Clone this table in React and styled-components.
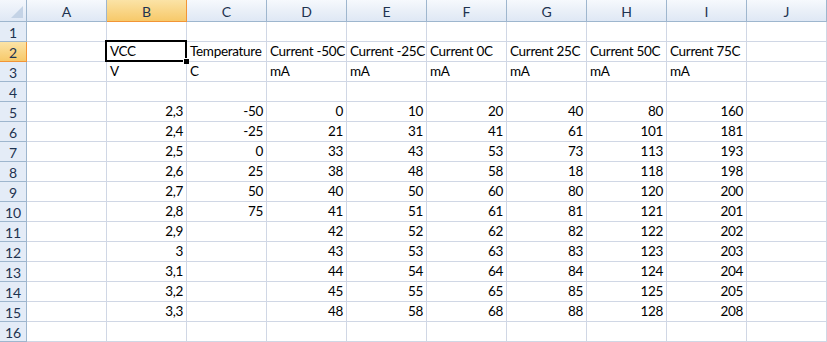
import React from 'react';
import styled, { createGlobalStyle, css } from 'styled-components';

const GlobalStyle = createGlobalStyle`
  html, body {
    margin: 0;
    padding: 0;
    background: #ffffff;
  }
  body {
    font-family: Lato, "Open Sans", sans-serif;
  }
`;

const Sheet = styled.div`
  display: grid;
  grid-template-columns: 27px repeat(10, 80px);
  grid-template-rows: 22px repeat(16, 20px);
  width: 827px;
  height: 342px;
  overflow: hidden;
  background: #ffffff;
`;

const Corner = styled.div`
  position: relative;
  box-sizing: border-box;
  background: linear-gradient(#f4f7fc, #dfe8f5);
  border-right: 1px solid #9eb6ce;
  border-bottom: 1px solid #9eb6ce;

  &::after {
    content: '';
    position: absolute;
    right: 3px;
    bottom: 3px;
    width: 0;
    height: 0;
    border-left: 12px solid transparent;
    border-bottom: 12px solid #c4d3e6;
  }
`;

const headActive = css`
  background: linear-gradient(#fbe3a6, #f7c96a);
  border-color: #f29536;
`;

const ColHead = styled.div`
  box-sizing: border-box;
  display: flex;
  align-items: center;
  justify-content: center;
  padding-top: 1px;
  background: linear-gradient(#f6f9fd 0%, #eaf0f8 50%, #dfe8f5 100%);
  border-right: 1px solid #9eb6ce;
  border-bottom: 1px solid #9eb6ce;
  color: #1e3350;
  font-size: 14px;
  ${(p) => p.$active && headActive}
`;

const RowHead = styled.div`
  box-sizing: border-box;
  display: flex;
  align-items: center;
  justify-content: center;
  padding-top: 1px;
  background: #e4ecf7;
  border-right: 1px solid #9eb6ce;
  border-bottom: 1px solid #9eb6ce;
  color: #1e3350;
  font-size: 14px;
  ${(p) => p.$active && headActive}
`;

const Cell = styled.div`
  position: relative;
  box-sizing: border-box;
  display: flex;
  align-items: flex-end;
  justify-content: ${(p) => (p.$num ? 'flex-end' : 'flex-start')};
  padding: 0 3px 1px 3px;
  border-right: 1px solid #d0d7e5;
  border-bottom: 1px solid #d0d7e5;
  font-size: 13.5px;
  letter-spacing: -0.3px;
  line-height: 18px;
  color: #000000;
  white-space: nowrap;
  overflow: ${(p) => (p.$selected ? 'visible' : 'hidden')};
`;

const Selection = styled.div`
  position: absolute;
  left: -2px;
  top: -2px;
  right: -1px;
  bottom: -1px;
  border: 2px solid #000000;
  pointer-events: none;
  z-index: 2;

  &::after {
    content: '';
    position: absolute;
    right: -4px;
    bottom: -4px;
    width: 5px;
    height: 5px;
    background: #000000;
    border: 1px solid #ffffff;
    border-right: none;
    border-bottom: none;
  }
`;

const COLS = ['A', 'B', 'C', 'D', 'E', 'F', 'G', 'H', 'I', 'J'];

const data = {
  2: { B: 'VCC', C: 'Temperature', D: 'Current -50C', E: 'Current -25C', F: 'Current 0C', G: 'Current 25C', H: 'Current 50C', I: 'Current 75C' },
  3: { B: 'V', C: 'C', D: 'mA', E: 'mA', F: 'mA', G: 'mA', H: 'mA', I: 'mA' },
};

const numbers = [
  ['2,3', -50, 0, 10, 20, 40, 80, 160],
  ['2,4', -25, 21, 31, 41, 61, 101, 181],
  ['2,5', 0, 33, 43, 53, 73, 113, 193],
  ['2,6', 25, 38, 48, 58, 18, 118, 198],
  ['2,7', 50, 40, 50, 60, 80, 120, 200],
  ['2,8', 75, 41, 51, 61, 81, 121, 201],
  ['2,9', '', 42, 52, 62, 82, 122, 202],
  ['3', '', 43, 53, 63, 83, 123, 203],
  ['3,1', '', 44, 54, 64, 84, 124, 204],
  ['3,2', '', 45, 55, 65, 85, 125, 205],
  ['3,3', '', 48, 58, 68, 88, 128, 208],
];

numbers.forEach((vals, i) => {
  const row = {};
  ['B', 'C', 'D', 'E', 'F', 'G', 'H', 'I'].forEach((c, j) => {
    row[c] = vals[j] === '' ? '' : String(vals[j]);
  });
  data[5 + i] = row;
});

const App = () => {
  const rows = Array.from({ length: 16 }, (_, i) => i + 1);
  return (
    <>
      <GlobalStyle />
      <Sheet>
        <Corner />
        {COLS.map((c) => (
          <ColHead key={c} $active={c === 'B'}>
            {c}
          </ColHead>
        ))}
        {rows.map((r) => (
          <React.Fragment key={r}>
            <RowHead $active={r === 2}>{r}</RowHead>
            {COLS.map((c) => {
              const value = (data[r] && data[r][c]) || '';
              const selected = r === 2 && c === 'B';
              return (
                <Cell key={c} $num={r >= 5} $selected={selected}>
                  {value}
                  {selected && <Selection />}
                </Cell>
              );
            })}
          </React.Fragment>
        ))}
      </Sheet>
    </>
  );
};

export default App;
